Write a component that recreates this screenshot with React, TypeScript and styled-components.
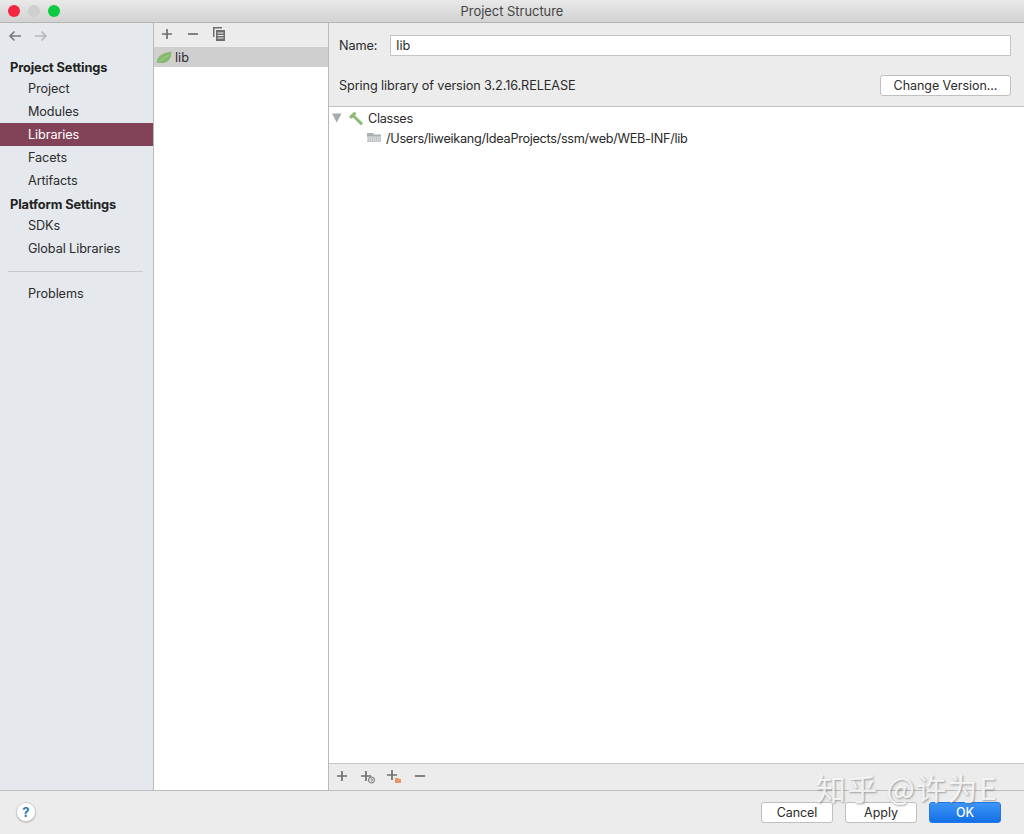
import React from "react";
import styled, { createGlobalStyle } from "styled-components";

const Global = createGlobalStyle`
  html, body { margin: 0; padding: 0; }
  body { font-family: Inter, "Liberation Sans", sans-serif; font-size: 12.7px; color: #2a2a2a; background: #ececec; }
`;
const Window = styled.div`
  position: relative; width: 1024px; height: 834px; display: flex; flex-direction: column; overflow: hidden; background: #ececec;
`;
const TitleBar = styled.header`
  position: relative; flex: 0 0 22px; height: 22px; box-sizing: content-box; display: flex; align-items: center; justify-content: center;
  background: linear-gradient(#e9e9e9, #d2d2d2); border-bottom: 1px solid #b5b5b5; font-size: 12.9px; color: #444;
`;
const Lights = styled.div`
  position: absolute; left: 8px; top: 5px; display: flex; gap: 8px;
`;
const Light = styled.span<{ $c: string }>`
  width: 12px; height: 12px; border-radius: 50%; background: ${p => p.$c};
`;
const Main = styled.div`
  flex: 1; display: flex; min-height: 0; border-bottom: 1px solid #bdbdbd;
`;
const Sidebar = styled.nav`
  width: 153px; flex: none; background: #e5e9ed; border-right: 1px solid #b9b9b9; display: flex; flex-direction: column;
`;
const NavArrows = styled.div`
  height: 26px; padding: 0 7px; display: flex; align-items: center; gap: 10px;
`;
const Heading = styled.div<{ $top: number }>`
  margin-top: ${p => p.$top}px; height: 20px; line-height: 22px; padding-left: 10px; font-weight: 700; font-size: 12.8px; color: #222; letter-spacing: -.1px;
`;
const NavItem = styled.div<{ $active?: boolean }>`
  height: 23px; line-height: 23px; padding-left: 28px; font-size: 12.7px; letter-spacing: -.1px;
  color: ${p => (p.$active ? "#fff" : "#2b2b2b")}; background: ${p => (p.$active ? "#824359" : "transparent")};
`;
const Rule = styled.hr`
  margin: 11px 10px 10px 8px; border: 0; height: 1px; background: #c6cacd;
`;
const ListPane = styled.section`
  width: 174px; flex: none; background: #fff; border-right: 1px solid #b9b9b9; display: flex; flex-direction: column;
`;
const ListTools = styled.div`
  height: 24px; padding: 0 0 2px 3px; box-sizing: border-box; background: #ececec; display: flex; align-items: center; gap: 6px;
`;
const ToolIcon = styled.svg`
  width: 20px; height: 20px; flex: none; display: block;
`;
const SmallIcon = styled(ToolIcon)`
  width: 16px; height: 16px;
`;
const TriangleIcon = styled(ToolIcon)`
  width: 12px; height: 12px;
`;
const ListRow = styled.div`
  height: 20px; background: #cfcfcf; display: flex; align-items: center; padding-left: 2px; gap: 3px; font-size: 12.7px;
`;
const Detail = styled.section`
  flex: 1; min-width: 0; display: flex; flex-direction: column; background: #fff;
`;
const DetailHead = styled.div`
  height: 84px; box-sizing: border-box; background: #ececec; border-bottom: 1px solid #c2c2c2; padding: 12px 13px 0 10px;
`;
const NameRow = styled.div`
  display: flex; align-items: center; height: 21px; gap: 13px; letter-spacing: -.1px;
`;
const NameField = styled.div`
  flex: 1; height: 19px; line-height: 19px; background: #fff; border: 1px solid #c4c4c4; padding-left: 5px; letter-spacing: 0;
`;
const InfoRow = styled.div`
  margin-top: 19px; height: 21px; display: flex; align-items: center; justify-content: space-between; letter-spacing: -.1px;
`;
const Button = styled.button<{ $primary?: boolean; $w: number }>`
  width: ${p => p.$w}px; height: 21px; padding: 0; font: inherit; font-size: 12.5px; letter-spacing: -.05px; border-radius: 3px;
  color: ${p => (p.$primary ? "#fff" : "#2b2b2b")}; font-weight: ${p => (p.$primary ? 500 : 400)};
  background: ${p => (p.$primary ? "linear-gradient(#3d95f6, #146fe6)" : "#fff")};
  border: 1px solid ${p => (p.$primary ? "#1f78e8" : "#bfbfbf")};
`;
const Tree = styled.div`
  flex: 1; padding-top: 1px; letter-spacing: -.3px;
`;
const TreeRow = styled.div<{ $indent: number }>`
  height: 20px; display: flex; align-items: center; gap: 4px; padding-left: ${p => p.$indent}px;
`;
const DetailTools = styled.div`
  height: 27px; box-sizing: border-box; background: #ececec; border-top: 1px solid #c6c6c6; display: flex; align-items: center; padding: 0 0 2px 3px; gap: 6px;
`;
const Footer = styled.footer`
  flex: 0 0 43px; display: flex; align-items: center; padding: 0 23px 0 16px; gap: 12px;
`;
const Help = styled.div`
  width: 18px; height: 18px; border-radius: 50%; background: #fff; border: 1px solid #cfcfcf; box-shadow: 0 1px 1px #bbb;
  color: #2f76b8; font-weight: 700; font-size: 13px; text-align: center; line-height: 18px; margin-right: auto; transform: translateY(-1px);
`;
const Watermark = styled.div`
  position: absolute; left: 816px; top: 767px; font-family: "Noto Sans CJK SC", sans-serif; font-size: 30px; line-height: 40px; letter-spacing: 1.3px; white-space: nowrap;
  color: rgba(255,255,255,.82); text-shadow: 1px 1px 2px rgba(90,90,90,.55); pointer-events: none;
`;

const stroke = "#6e6e6e";
const Plus = () => (
  <ToolIcon viewBox="0 0 20 20"><path d="M10 5v10M5 10h10" stroke={stroke} strokeWidth="1.7" /></ToolIcon>
);
const Minus = () => (
  <ToolIcon viewBox="0 0 20 20"><path d="M5 10h10" stroke={stroke} strokeWidth="1.7" /></ToolIcon>
);
const Copy = () => (
  <ToolIcon viewBox="0 0 20 20">
    <path d="M4 3h9v1.500H5.500V13H4z" fill={stroke} />
    <path d="M7 6h9v11H7z" fill={stroke} />
    <path d="M8.500 9h6M8.500 11.500h6M8.500 14h6" stroke="#ececec" strokeWidth="1" />
  </ToolIcon>
);
const PlusGlobe = () => (
  <ToolIcon viewBox="0 0 20 20">
    <path d="M8 5v10M3 10h10" stroke={stroke} strokeWidth="1.7" />
    <circle cx="13.5" cy="14" r="3" fill="#ececec" stroke={stroke} strokeWidth="1" />
    <path d="M12.500 13h2l-1 2h1" stroke={stroke} strokeWidth=".8" fill="none" />
  </ToolIcon>
);
const PlusFolder = () => (
  <ToolIcon viewBox="0 0 20 20">
    <path d="M8 4v10M3 9h10" stroke={stroke} strokeWidth="1.7" />
    <path d="M11 12h3l1 1h2v4h-6z" fill="#e8956a" />
  </ToolIcon>
);
const Arrow = ({ dir, color }: { dir: "l" | "r"; color: string }) => (
  <SmallIcon viewBox="0 0 16 16">
    <path d={dir === "l" ? "M14 8H3M7.500 3.500 3 8l4.500 4.500" : "M2 8h11M8.500 3.500 13 8l-4.500 4.500"} stroke={color} strokeWidth="1.6" fill="none" />
  </SmallIcon>
);
const Leaf = () => (
  <SmallIcon viewBox="0 0 16 16">
    <path d="M1 14C.5 8 5.500 4 15.500 2.500c0 7-3.500 11.500-9.500 11.500-2 0-3.800-.1-5-.5z" fill="#86b96c" />
    <path d="M3 12.500C6 10 9 8 12.500 6.500" stroke="#b7d6a5" strokeWidth=".8" fill="none" />
  </SmallIcon>
);
const Triangle = () => (
  <TriangleIcon viewBox="0 0 12 12">
    <path d="M0 1.500h9.500L4.750 10.500z" fill="#a3abab" />
  </TriangleIcon>
);
const Hammer = () => (
  <SmallIcon viewBox="0 0 16 16">
    <path d="M1 6.500 6 2l2.500 1L7 5.500l8 7.500-2 2.500L5 7.500 3 9z" fill="#8cbb74" />
  </SmallIcon>
);
const FolderLines = () => (
  <SmallIcon viewBox="0 0 16 16">
    <path d="M1 3h6l1 1.500h7V6H1z" fill="#a9b0b3" />
    <path d="M1 6h14v6H1z" fill="#c2c7c9" />
    <path d="M1 8h14M1 10h14" stroke="#eceeef" strokeWidth=".9" strokeDasharray="1 1" />
  </SmallIcon>
);

export default function App() {
  return (
    <Window>
      <Global />
      <TitleBar>
        <Lights>
          <Light $c="#f5263f" />
          <Light $c="#cfcfcf" />
          <Light $c="#0ccb3f" />
        </Lights>
        Project Structure
      </TitleBar>
      <Main>
        <Sidebar>
          <NavArrows>
            <Arrow dir="l" color="#7a7a7a" />
            <Arrow dir="r" color="#b4b8bb" />
          </NavArrows>
          <Heading $top={8}>Project Settings</Heading>
          <NavItem>Project</NavItem>
          <NavItem>Modules</NavItem>
          <NavItem $active>Libraries</NavItem>
          <NavItem>Facets</NavItem>
          <NavItem>Artifacts</NavItem>
          <Heading $top={2}>Platform Settings</Heading>
          <NavItem>SDKs</NavItem>
          <NavItem>Global Libraries</NavItem>
          <Rule />
          <NavItem>Problems</NavItem>
        </Sidebar>
        <ListPane>
          <ListTools>
            <Plus />
            <Minus />
            <Copy />
          </ListTools>
          <ListRow>
            <Leaf />
            lib
          </ListRow>
        </ListPane>
        <Detail>
          <DetailHead>
            <NameRow>
              <span>Name:</span>
              <NameField>lib</NameField>
            </NameRow>
            <InfoRow>
              <span>Spring library of version 3.2.16.RELEASE</span>
              <Button $w={131}>Change Version...</Button>
            </InfoRow>
          </DetailHead>
          <Tree>
            <TreeRow $indent={3}>
              <Triangle />
              <Hammer />
              Classes
            </TreeRow>
            <TreeRow $indent={37}>
              <FolderLines />
              /Users/liweikang/IdeaProjects/ssm/web/WEB-INF/lib
            </TreeRow>
          </Tree>
          <DetailTools>
            <Plus />
            <PlusGlobe />
            <PlusFolder />
            <Minus />
          </DetailTools>
        </Detail>
      </Main>
      <Footer>
        <Help>?</Help>
        <Button $w={72}>Cancel</Button>
        <Button $w={72}>Apply</Button>
        <Button $w={72} $primary>OK</Button>
      </Footer>
      <Watermark>知乎 @许为E</Watermark>
    </Window>
  );
}
